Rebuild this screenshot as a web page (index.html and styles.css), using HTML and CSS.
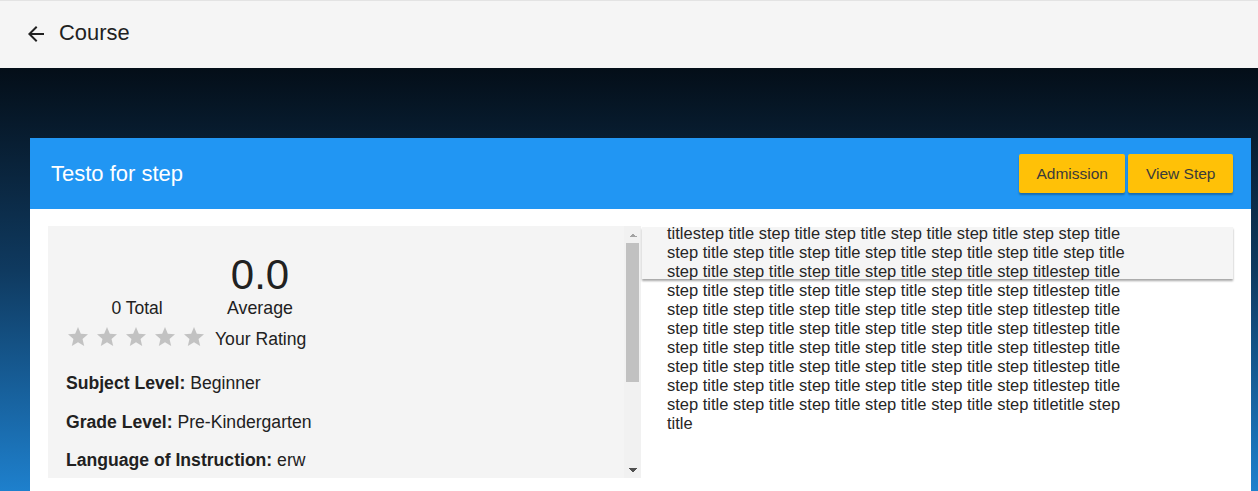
FILE: index.html
```html
<!DOCTYPE html>
<html lang="en">
<head>
<meta charset="utf-8">
<title>Course</title>
<link rel="stylesheet" href="styles.css">
</head>
<body>
<header class="topbar">
  <svg class="back-icon" viewBox="0 0 24 24" width="24" height="24" aria-hidden="true"><path d="M20 11H7.83l5.59-5.59L12 4l-8 8 8 8 1.41-1.41L7.83 13H20v-2z"/></svg>
  <span class="topbar-title">Course</span>
</header>
<main class="page">
  <section class="card">
    <div class="card-header">
      <h1 class="card-title">Testo for step</h1>
      <div class="actions">
        <button class="btn">Admission</button>
        <button class="btn">View Step</button>
      </div>
    </div>
    <div class="card-body">
      <div class="info-panel">
        <div class="info-inner">
          <div class="rating-top">
            <div class="total">0 Total</div>
            <div class="avg">
              <div class="avg-num">0.0</div>
              <div class="avg-label">Average</div>
            </div>
          </div>
          <div class="stars-row">
            <div class="stars">
              <svg class="star" viewBox="0 0 24 24"><path d="M12 17.27L18.18 21l-1.64-7.03L22 9.24l-7.19-.61L12 2 9.19 8.63 2 9.24l5.46 4.73L5.82 21z"/></svg>
              <svg class="star" viewBox="0 0 24 24"><path d="M12 17.27L18.18 21l-1.64-7.03L22 9.24l-7.19-.61L12 2 9.19 8.63 2 9.24l5.46 4.73L5.82 21z"/></svg>
              <svg class="star" viewBox="0 0 24 24"><path d="M12 17.27L18.18 21l-1.64-7.03L22 9.24l-7.19-.61L12 2 9.19 8.63 2 9.24l5.46 4.73L5.82 21z"/></svg>
              <svg class="star" viewBox="0 0 24 24"><path d="M12 17.27L18.18 21l-1.64-7.03L22 9.24l-7.19-.61L12 2 9.19 8.63 2 9.24l5.46 4.73L5.82 21z"/></svg>
              <svg class="star" viewBox="0 0 24 24"><path d="M12 17.27L18.18 21l-1.64-7.03L22 9.24l-7.19-.61L12 2 9.19 8.63 2 9.24l5.46 4.73L5.82 21z"/></svg>
            </div>
            <span class="your-rating">Your Rating</span>
          </div>
          <div class="details">
            <p class="detail"><b>Subject Level:</b> Beginner</p>
            <p class="detail"><b>Grade Level:</b> Pre-Kindergarten</p>
            <p class="detail"><b>Language of Instruction:</b> erw</p>
          </div>
        </div>
        <div class="scrollbar" aria-hidden="true">
          <div class="sb-btn sb-up"></div>
          <div class="sb-track"><div class="sb-thumb"></div></div>
          <div class="sb-btn sb-down"></div>
        </div>
      </div>
      <div class="steps-col">
        <div class="steps-band"></div>
        <p class="steps-text">titlestep title step title step title step title step title step step title<br>step title step title step title step title step title step title step title<br>step title step title step title step title step title step titlestep title<br>step title step title step title step title step title step titlestep title<br>step title step title step title step title step title step titlestep title<br>step title step title step title step title step title step titlestep title<br>step title step title step title step title step title step titlestep title<br>step title step title step title step title step title step titlestep title<br>step title step title step title step title step title step titlestep title<br>step title step title step title step title step title step titletitle step<br>title</p>
      </div>
    </div>
  </section>
</main>
</body>
</html>
```
FILE: styles.css
```css
* { box-sizing: border-box; }
html, body { margin: 0; padding: 0; }
body {
  font-family: "Liberation Sans", Arial, sans-serif;
  color: #212121;
  background: #1e80cd;
  overflow: hidden;
}
.topbar {
  height: 68px;
  background: #f5f5f5;
  border-top: 1px solid #e3e3e3;
  display: flex;
  align-items: center;
  padding: 0 0 3px 24px;
}
.back-icon { fill: #212121; margin-right: 11px; margin-top: 1px; }
.topbar-title { font-size: 21.9px; color: #212121; }
.page {
  height: 423px;
  background: linear-gradient(to bottom, #040e18 0%, #0f3a60 48%, #1e80cd 100%);
  padding: 70px 7px 0 30px;
}
.card { background: #fff; height: 353px; }
.card-header {
  height: 71px;
  background: #2196f3;
  display: flex;
  align-items: center;
  justify-content: space-between;
  padding: 0 18px 0 21px;
}
.card-title { margin: 0; font-size: 22px; font-weight: 400; color: #fff; }
.actions { display: flex; gap: 3px; }
.btn {
  height: 39px;
  padding: 0 17.5px;
  border: 0;
  border-radius: 2px;
  background: #ffc107;
  color: #3a3a3a;
  font-family: "Liberation Sans", Arial, sans-serif;
  font-size: 15.5px;
  box-shadow: 0 2px 2px rgba(0,0,0,0.28);
}
.card-body {
  display: grid;
  grid-template-columns: 593px 1fr;
  column-gap: 1px;
  padding: 17px 18px;
}
.info-panel {
  height: 252px;
  background: #f4f4f4;
  display: flex;
  overflow: hidden;
}
.info-inner {
  flex: 1;
  padding: 26px 0 0 18px;
}
.scrollbar {
  width: 17px;
  display: flex;
  flex-direction: column;
  background: #f1f1f1;
}
.sb-btn {
  height: 17px;
  background-repeat: no-repeat;
  background-position: center;
  background-size: 8px 4px;
}
.sb-up { background-image: conic-gradient(from 135deg at 50% 0, #a3a3a3 90deg, transparent 0); }
.sb-down { background-image: conic-gradient(from -45deg at 50% 100%, #505050 90deg, transparent 0); }
.sb-track { flex: 1; padding: 0 2px; }
.sb-thumb { height: 139px; background: #c1c1c1; }
.rating-top { display: flex; align-items: flex-end; }
.total { width: 142px; text-align: center; font-size: 17.5px; line-height: 20px; padding-top: 2px; }
.avg { width: 104px; text-align: center; }
.avg-num { font-size: 42px; line-height: 46px; }
.avg-label { font-size: 17.8px; line-height: 20px; }
.stars-row { display: flex; align-items: center; margin-top: 7px; }
.stars { display: flex; gap: 5px; }
.star { width: 24px; height: 24px; fill: #c2c2c2; }
.your-rating { margin-left: 9px; font-size: 17.6px; line-height: 20px; padding-top: 3px; }
.details { display: flex; flex-direction: column; gap: 18.5px; margin-top: 24px; }
.detail { margin: 0; font-size: 17.6px; line-height: 20px; }
.detail b { font-weight: 700; }
.steps-col { position: relative; }
.steps-band {
  position: absolute;
  top: 1px; left: 0; right: 0;
  height: 52px;
  background: #f5f5f5;
  box-shadow: 0 2px 2px rgba(0,0,0,0.35);
}
.steps-text {
  position: relative;
  margin: -2.5px 0 0 0;
  padding-left: 25px;
  font-size: 16.5px;
  line-height: 19px;
  color: #262626;
  white-space: nowrap;
}
```
